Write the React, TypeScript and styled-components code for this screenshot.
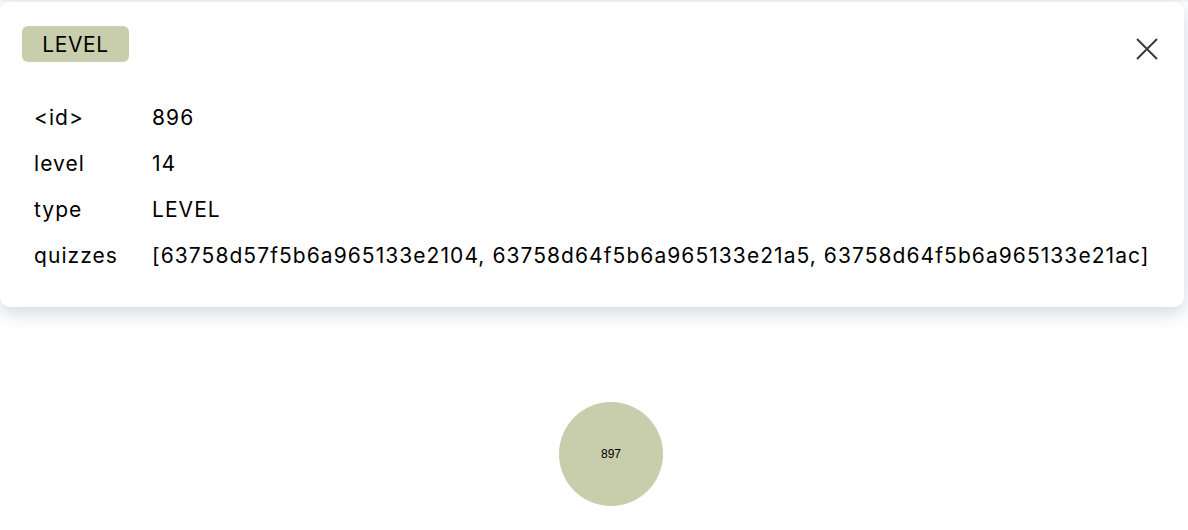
import styled, { createGlobalStyle } from 'styled-components';

const GlobalStyle = createGlobalStyle`
  html, body {
    margin: 0;
    padding: 0;
    background: #ffffff;
    font-family: Inter, "Liberation Sans", sans-serif;
    color: #000;
  }
`;

interface Field {
  label: string;
  value: string;
}

const fields: Field[] = [
  { label: '<id>', value: '896' },
  { label: 'level', value: '14' },
  { label: 'type', value: 'LEVEL' },
  {
    label: 'quizzes',
    value:
      '[63758d57f5b6a965133e2104, 63758d64f5b6a965133e21a5, 63758d64f5b6a965133e21ac]',
  },
];

const App = () => {
  return (
    <Page>
      <GlobalStyle />
      <Card>
        <Header>
          <Badge>LEVEL</Badge>
          <CloseButton aria-label="close">
            <svg width="24" height="24" viewBox="0 0 24 24">
              <path
                d="M2 2 L22 22 M22 2 L2 22"
                stroke="#3a3a44"
                strokeWidth="2"
                fill="none"
              />
            </svg>
          </CloseButton>
        </Header>
        <Fields>
          {fields.map((f) => (
            <Row key={f.label}>
              <Label>{f.label}</Label>
              <Value>{f.value}</Value>
            </Row>
          ))}
        </Fields>
      </Card>
      <Canvas>
        <Node>897</Node>
      </Canvas>
    </Page>
  );
};

export default App;

const Page = styled.div`
  width: 1188px;
  height: 530px;
  overflow: hidden;
  padding-top: 2px;
  box-sizing: border-box;
  background: linear-gradient(#eef0f4 0, #ffffff 3px);
`;

const Card = styled.div`
  width: 1184px;
  height: 305px;
  box-sizing: border-box;
  background: #ffffff;
  border-radius: 10px;
  box-shadow: 0 6px 18px rgba(60, 72, 130, 0.22);
  padding: 24px 22px 0 22px;
`;

const Header = styled.div`
  display: flex;
  justify-content: space-between;
  align-items: flex-start;
`;

const Badge = styled.div`
  background: #c8ceac;
  border-radius: 6px;
  height: 36px;
  width: 107px;
  box-sizing: border-box;
  display: flex;
  align-items: center;
  justify-content: center;
  font-size: 21px;
  letter-spacing: 0.6px;
`;

const CloseButton = styled.button`
  border: none;
  background: none;
  padding: 0;
  margin: 11px 3px 0 0;
  width: 24px;
  height: 24px;
  cursor: pointer;
`;

const Fields = styled.div`
  display: flex;
  flex-direction: column;
  margin-top: 32px;
  padding-left: 12px;
`;

const Row = styled.div`
  display: flex;
  align-items: center;
  height: 46px;
  font-size: 21px;
  letter-spacing: 1.06px;
`;

const Label = styled.div`
  width: 118px;
`;

const Value = styled.div`
  white-space: nowrap;
`;

const Canvas = styled.div`
  display: flex;
  justify-content: center;
  padding-top: 95px;
  padding-left: 34px;
`;

const Node = styled.div`
  width: 104px;
  height: 104px;
  border-radius: 50%;
  background: #c8ceac;
  display: flex;
  align-items: center;
  justify-content: center;
  font-size: 12px;
  font-family: "Liberation Sans", Arial, sans-serif;
`;
